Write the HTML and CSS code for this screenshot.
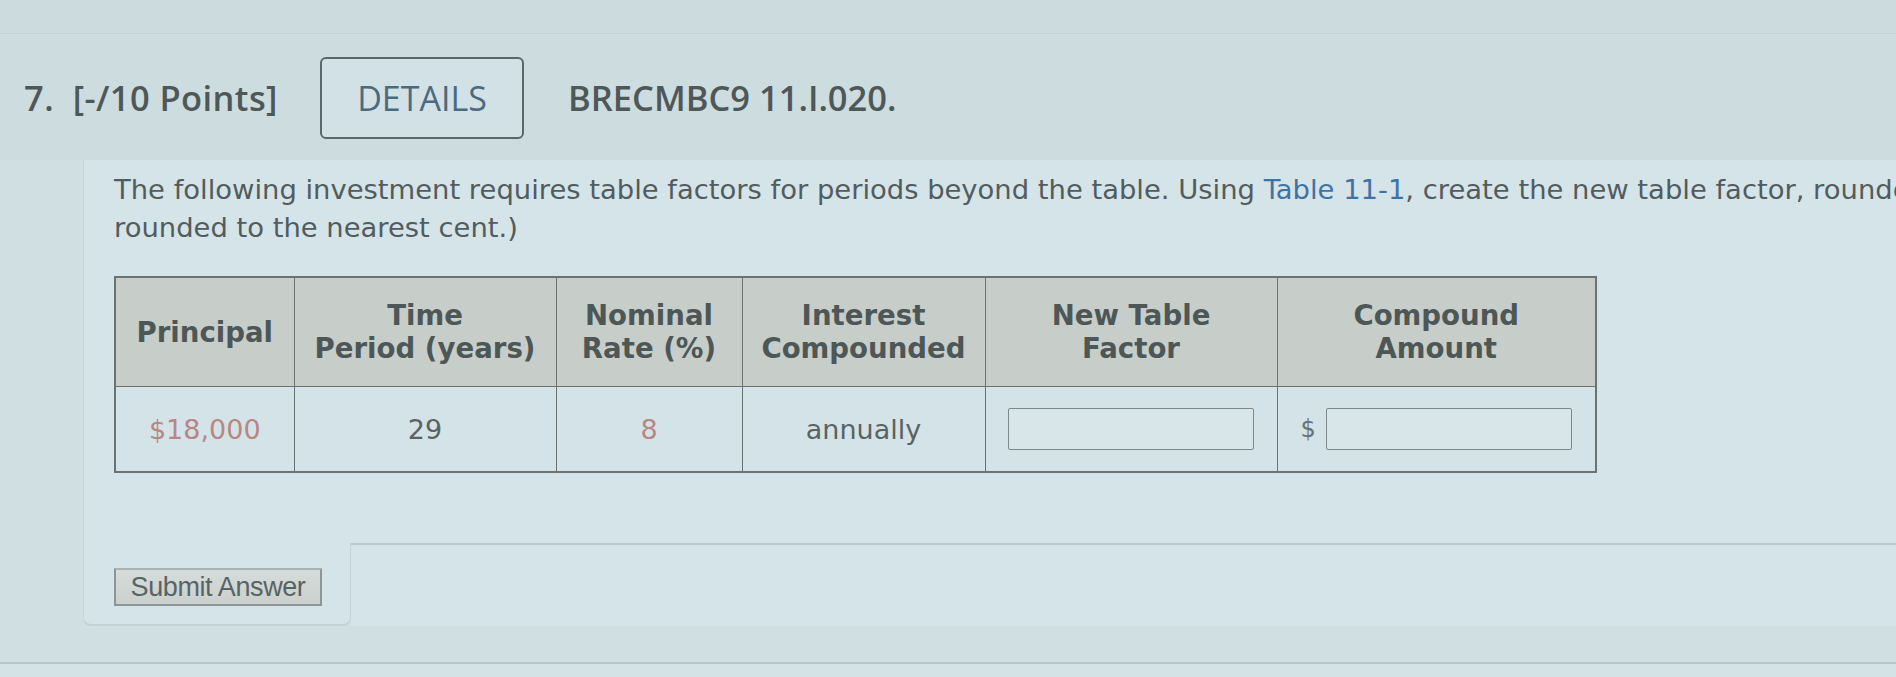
FILE: index.html
```html
<!DOCTYPE html>
<html>
<head>
<meta charset="utf-8">
<link rel="stylesheet" href="styles.css">
</head>
<body>
<div class="page">
  <div class="topstrip"></div>
  <div class="qhead">
    <span class="qnum">7.&nbsp; [-/10 Points]</span>
    <button class="details">DETAILS</button>
    <span class="qcode">BRECMBC9 11.I.020.</span>
  </div>
  <div class="qbody">
    <div class="panel">
      <p class="prompt"><span class="nowrap">The following investment requires table factors for periods beyond the table. Using <a class="link">Table 11-1</a>, create the new table factor, rounded</span><br>rounded to the nearest cent.)</p>
      <table class="grid">
        <colgroup>
          <col class="c1"><col class="c2"><col class="c3"><col class="c4"><col class="c5"><col class="c6">
        </colgroup>
        <thead>
          <tr>
            <th>Principal</th>
            <th>Time<br>Period (years)</th>
            <th>Nominal<br>Rate (%)</th>
            <th>Interest<br>Compounded</th>
            <th>New Table<br>Factor</th>
            <th>Compound<br>Amount</th>
          </tr>
        </thead>
        <tbody>
          <tr>
            <td class="red">$18,000</td>
            <td>29</td>
            <td class="red">8</td>
            <td>annually</td>
            <td><input class="ans" type="text"></td>
            <td><span class="dollar">$</span><input class="ans" type="text"></td>
          </tr>
        </tbody>
      </table>
    </div>
    <div class="footer">
      <div class="submitbox"><button class="submit">Submit Answer</button></div>
      <div class="filler"></div>
    </div>
  </div>
  <div class="bottomline"></div>
</div>
</body>
</html>
```
FILE: styles.css
```css
html, body {
  margin: 0;
  padding: 0;
}
body {
  width: 1896px;
  height: 677px;
  overflow: hidden;
  background: #cfdfe2;
  color: #525c5e;
}
.page {
  width: 1896px;
  height: 677px;
  display: flex;
  flex-direction: column;
}
.topstrip {
  height: 33px;
  background: #ccdbde;
  border-bottom: 1px solid #c3d2d6;
}
.qhead {
  height: 126px;
  background: #cddcdf;
  display: flex;
  align-items: center;
  padding-left: 24px;
  font-family: "Open Sans", sans-serif;
  font-size: 34.5px;
  color: #4f5859;
}
.qnum {
  font-weight: 600;
  width: 296px;
  letter-spacing: 0.4px;
}
.details {
  width: 204px;
  height: 82px;
  border: 2px solid #5a676b;
  border-radius: 6px;
  background: #d2e1e5;
  color: #4c6a7e;
  font-family: "Open Sans", sans-serif;
  font-size: 34px;
  padding: 0;
  margin-right: 44px;
  margin-top: 2px;
}
.qcode {
  font-weight: 600;
}
.qbody {
  margin-left: 83px;
  display: flex;
  flex-direction: column;
}
.panel {
  background: #d5e4e8;
  border-left: 1px solid #c6d6da;
  padding: 11px 0 0 30px;
  height: 383px;
  box-sizing: border-box;
}
.prompt {
  margin: 0;
  font-family: "DejaVu Sans", Verdana, sans-serif;
  font-size: 27.4px;
  line-height: 38px;
  color: #525c5e;
  white-space: nowrap;
}
.link {
  color: #3f73a6;
}
.grid {
  margin-top: 29px;
  border-collapse: collapse;
  table-layout: fixed;
  width: 1481px;
  font-family: "DejaVu Sans", Verdana, sans-serif;
  font-size: 27px;
  border: 2px solid #6a7372;
}
.c1 { width: 179px; }
.c2 { width: 262px; }
.c3 { width: 186px; }
.c4 { width: 243px; }
.c5 { width: 292px; }
.c6 { width: 319px; }
.grid th {
  background: #c7cdc8;
  color: #4d5757;
  font-weight: bold;
  font-size: 27.6px;
  height: 108px;
  line-height: 33px;
  border: 1.5px solid #6a7372;
  padding: 0;
  text-align: center;
}
.grid td {
  background: #d4e3e7;
  color: #5a6364;
  height: 84px;
  border: 1.5px solid #6a7372;
  padding: 0;
  text-align: center;
}
.grid td.red {
  color: #b88784;
}
.ans {
  width: 246px;
  height: 42px;
  box-sizing: border-box;
  border: 1.5px solid #7f898a;
  border-radius: 2px;
  background: #d8e6ea;
  vertical-align: middle;
}
.dollar {
  color: #6a7374;
  font-size: 24px;
  margin-right: 10px;
  vertical-align: middle;
}
.footer {
  display: flex;
  height: 83px;
}
.submitbox {
  width: 268px;
  box-sizing: border-box;
  background: #d5e4e8;
  border-left: 1px solid #c6d6da;
  border-bottom: 2px solid #c2d2d6;
  border-right: 1px solid #c2d2d6;
  border-radius: 0 0 8px 8px;
  padding: 25px 0 0 30px;
}
.submit {
  width: 208px;
  height: 38px;
  padding: 0;
  background: linear-gradient(#d6dcda, #c9d0ce);
  border: 2px solid #8c9696;
  border-top-color: #a9b3b3;
  border-radius: 1px;
  font-family: "Liberation Sans", Arial, sans-serif;
  font-size: 27px;
  color: #596364;
  letter-spacing: -0.4px;
}
.filler {
  flex: 1;
  border-top: 2px solid #b9c9cd;
  background: #d5e4e8;
}
.bottomline {
  margin-top: 36px;
  border-top: 2px solid #b6c6ca;
  flex: 1;
  background: #d3e3e6;
}
```
